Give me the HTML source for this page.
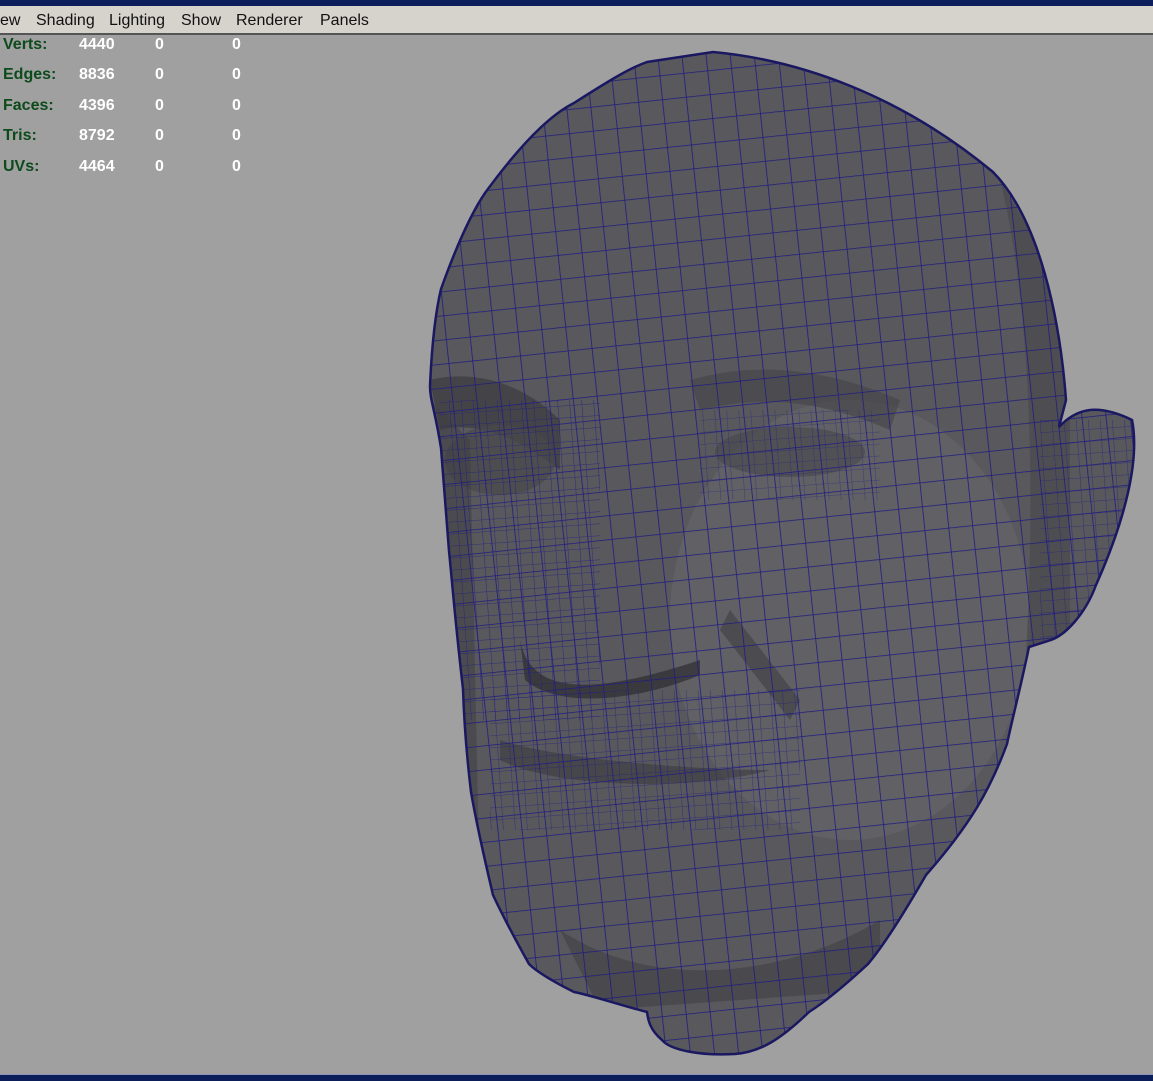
<!DOCTYPE html>
<html><head><meta charset="utf-8"><style>
html,body{margin:0;padding:0;}
body{width:1153px;height:1080px;overflow:hidden;background:#a0a0a0;position:relative;font-family:"Liberation Sans",sans-serif;}
.top{position:absolute;left:0;top:0;width:1153px;height:6px;background:#0c1e5a;}
.menu{position:absolute;left:0;top:6px;width:1153px;height:27px;background:#d6d3cc;border-bottom:2px solid #555;}
.menu span{position:absolute;top:6px;font-size:16px;color:#111;}
.bot{position:absolute;left:0;top:1074px;width:1153px;height:6px;background:#0c1e5a;border-top:1px solid #8a96b8;}
.st{position:absolute;font-weight:bold;font-size:16px;font-family:"Liberation Sans Narrow","Liberation Sans",sans-serif;}
.l{color:#0d4a1c;left:3px;}
.v{color:#fff;}
</style></head><body>
<div class="top"></div>
<div class="menu">
<span style="left:0">ew</span><span style="left:36px">Shading</span><span style="left:109px">Lighting</span><span style="left:181px">Show</span><span style="left:236px">Renderer</span><span style="left:320px">Panels</span>
</div>
<div class="st l" style="top:36px">Verts:</div><div class="st v" style="top:36px;left:79px">4440</div><div class="st v" style="top:36px;left:155px">0</div><div class="st v" style="top:36px;left:232px">0</div>
<div class="st l" style="top:66px">Edges:</div><div class="st v" style="top:66px;left:79px">8836</div><div class="st v" style="top:66px;left:155px">0</div><div class="st v" style="top:66px;left:232px">0</div>
<div class="st l" style="top:97px">Faces:</div><div class="st v" style="top:97px;left:79px">4396</div><div class="st v" style="top:97px;left:155px">0</div><div class="st v" style="top:97px;left:232px">0</div>
<div class="st l" style="top:127px">Tris:</div><div class="st v" style="top:127px;left:79px">8792</div><div class="st v" style="top:127px;left:155px">0</div><div class="st v" style="top:127px;left:232px">0</div>
<div class="st l" style="top:158px">UVs:</div><div class="st v" style="top:158px;left:79px">4464</div><div class="st v" style="top:158px;left:155px">0</div><div class="st v" style="top:158px;left:232px">0</div>

<svg style="position:absolute;left:0;top:0" width="1153" height="1080">
<defs>
<pattern id="g" width="24" height="24" patternUnits="userSpaceOnUse" patternTransform="rotate(-6)">
<path d="M0 0H24M0 0V24" stroke="#201c80" stroke-width="1.6" fill="none"/>
</pattern>
<pattern id="gs" width="12" height="12" patternUnits="userSpaceOnUse" patternTransform="rotate(-4)">
<path d="M0 0H12M0 0V12" stroke="#201c80" stroke-width="1.1" fill="none"/>
</pattern>
<clipPath id="c"><path id="h" d="M713 52 C800 60 900 95 993 172 C1040 220 1060 320 1066 400 L1059 427 C1075 410 1095 402 1132 420 C1140 460 1125 520 1096 585 C1085 615 1065 635 1051 640 L1029 647 C1020 690 1012 720 1007 744 C990 790 970 825 926 875 C900 920 880 950 868 964 C840 990 820 1005 809 1012 C780 1040 760 1052 735 1054 C700 1056 670 1050 662 1040 C650 1030 648 1020 647 1012 C620 1005 590 995 574 992 C550 980 535 970 529 964 C510 930 500 910 493 895 C480 840 475 815 471 792 C466 750 464 720 463 689 C455 620 452 580 449 551 C445 500 443 470 441 448 C435 410 430 400 430 386 C432 340 436 310 441 289 C455 250 470 215 485 193 C520 145 550 115 574 103 C610 80 630 68 647 62 Z"/></clipPath>
</defs>
<g clip-path="url(#c)">
<rect x="400" y="40" width="760" height="1030" fill="#58585d"/>
<ellipse cx="850" cy="620" rx="180" ry="220" fill="#606065"/>
<path d="M430 380 C470 370 520 380 560 420 L560 470 C520 440 480 420 440 430 Z" fill="#3c3c40" opacity=".7"/>
<path d="M690 380 C760 360 830 370 900 400 L890 430 C820 400 760 395 700 410 Z" fill="#444448" opacity=".6"/>
<ellipse cx="500" cy="460" rx="55" ry="35" fill="#48484c" opacity=".7"/>
<ellipse cx="790" cy="452" rx="75" ry="25" fill="#4a4a4e" opacity=".7"/>
<path d="M520 640 C530 690 580 700 700 660 L700 675 C640 700 560 710 525 680 Z" fill="#2e2e32" opacity=".7"/>
<path d="M730 610 L800 700 L790 720 L720 630 Z" fill="#3e3e42" opacity=".6"/>
<path d="M500 740 C560 760 700 770 770 770 C700 790 560 790 500 760 Z" fill="#3a3a40" opacity=".6"/>
<path d="M430 400 L470 440 L480 900 L530 964 L430 964 Z" fill="#3e3e42" opacity=".5"/>
<path d="M560 930 C650 990 780 980 880 920 L880 990 L600 1010 Z" fill="#404044" opacity=".6"/>
<path d="M1000 180 L1070 300 L1070 700 L1020 740 C1040 500 1030 300 1000 180Z" fill="#4a4a4e" opacity=".7"/>
<rect x="400" y="40" width="760" height="1030" fill="url(#g)"/>
<path d="M440 400 L600 400 L600 720 L440 720 Z" fill="url(#gs)" opacity=".7"/>
<path d="M490 690 L800 690 L800 830 L490 830 Z" fill="url(#gs)" opacity=".6"/>
<path d="M700 410 L880 410 L880 500 L700 500 Z" fill="url(#gs)" opacity=".5"/>
<path d="M1040 420 L1140 420 L1140 650 L1040 650 Z" fill="url(#gs)" opacity=".6"/>
</g>
<use href="#h" fill="none" stroke="#1a1860" stroke-width="2.5"/>
</svg>
<div class="bot"></div>
</body></html>
